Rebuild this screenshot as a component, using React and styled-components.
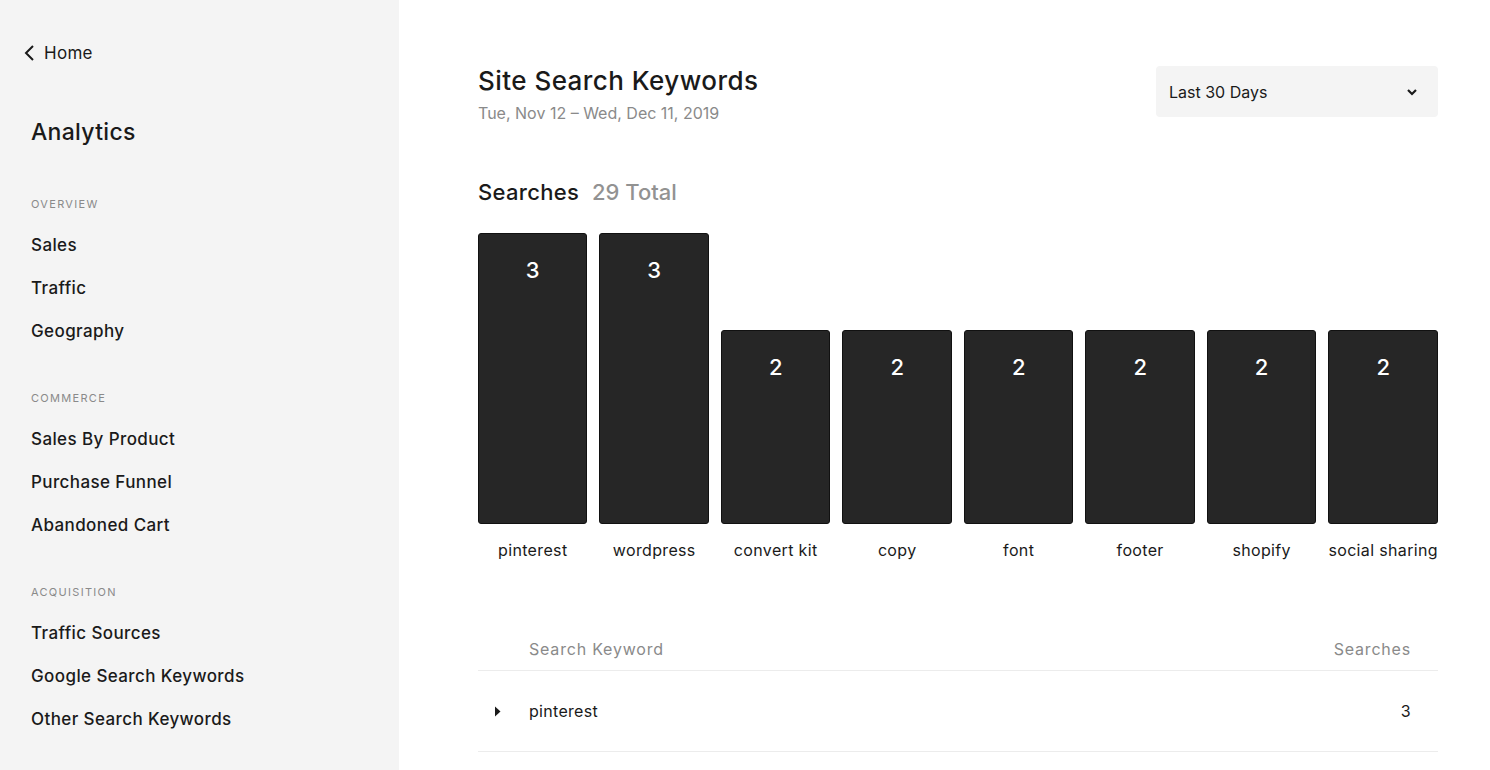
import React from "react";
import styled, { createGlobalStyle } from "styled-components";

const GlobalStyle = createGlobalStyle`
  html, body {
    margin: 0;
    padding: 0;
    background: #fff;
    font-family: Inter, "Noto Sans", sans-serif;
    color: #1a1a1a;
    -webkit-font-smoothing: antialiased;
  }
`;

const Page = styled.div`
  display: flex;
  height: 770px;
  overflow: hidden;
`;

const Sidebar = styled.aside`
  width: 399px;
  flex-shrink: 0;
  background: #f4f4f4;
  padding: 42px 0 0 31px;
  box-sizing: border-box;
`;

const BackLink = styled.a`
  display: flex;
  align-items: center;
  gap: 8px;
  margin-left: -7px;
  font-size: 17px;
  line-height: 22px;
  letter-spacing: 0.3px;
  color: #1a1a1a;
  text-decoration: none;
`;

const SideTitle = styled.h1`
  margin: 53px 0 0;
  font-size: 23px;
  line-height: 30px;
  font-weight: 500;
  letter-spacing: 0.3px;
`;

const Section = styled.div`
  margin-top: ${(p) => p.$top}px;
`;

const SectionLabel = styled.div`
  font-size: 11px;
  line-height: 14px;
  letter-spacing: 1.3px;
  color: #8a8a8a;
  text-transform: uppercase;
  margin-bottom: 23px;
`;

const NavItem = styled.div`
  font-size: 17px;
  line-height: 22px;
  height: 43px;
  font-weight: 500;
  letter-spacing: 0.4px;
  color: #1a1a1a;
`;

const Main = styled.main`
  flex: 1;
  padding: 64px 52px 0 79px;
`;

const Header = styled.div`
  display: flex;
  justify-content: space-between;
  align-items: flex-start;
`;

const Title = styled.h2`
  margin: 0;
  font-size: 26px;
  line-height: 34px;
  font-weight: 500;
  letter-spacing: 0.45px;
`;

const DateRange = styled.div`
  font-size: 16px;
  line-height: 20px;
  color: #8a8a8a;
  margin-top: 5px;
`;

const Select = styled.div`
  width: 282px;
  height: 51px;
  box-sizing: border-box;
  margin-top: 2px;
  background: #f4f4f4;
  border-radius: 4px;
  display: flex;
  align-items: center;
  justify-content: space-between;
  padding: 0 20px 0 13px;
  font-size: 16px;
  color: #1a1a1a;
`;

const ChartTitle = styled.div`
  margin-top: 55px;
  font-size: 22px;
  line-height: 28px;
  font-weight: 500;
  letter-spacing: 0.3px;
  display: flex;
  gap: 13px;
`;

const Muted = styled.span`
  color: #929292;
  letter-spacing: 0;
`;

const Chart = styled.div`
  display: flex;
  gap: 12px;
  margin-top: 27px;
`;

const Column = styled.div`
  flex: 1;
  display: flex;
  flex-direction: column;
  align-items: stretch;
`;

const BarArea = styled.div`
  height: 291px;
  display: flex;
  align-items: flex-end;
`;

const Bar = styled.div`
  width: 100%;
  box-sizing: border-box;
  background: #262626;
  border: 1px solid #111;
  border-radius: 3px;
  color: #fff;
  font-size: 22px;
  font-weight: 500;
  text-align: center;
  padding-top: 23px;
`;

const BarLabel = styled.div`
  text-align: center;
  font-size: 16px;
  line-height: 20px;
  margin-top: 16px;
  letter-spacing: 0.35px;
  color: #1a1a1a;
  white-space: nowrap;
`;

const Table = styled.div`
  margin-top: 68px;
`;

const Row = styled.div`
  display: grid;
  grid-template-columns: 51px 1fr auto;
  align-items: center;
  height: ${(p) => p.$h}px;
  border-bottom: 1px solid #ececec;
  padding-right: 27px;
  font-size: 16px;
  color: ${(p) => (p.$head ? "#8a8a8a" : "#1a1a1a")};
  letter-spacing: ${(p) => (p.$head ? "0.8px" : "0.3px")};
`;

const Caret = styled.span`
  display: flex;
  padding-left: 16px;
`;

const Chevron = () => (
  <svg width="12" height="18" viewBox="0 0 12 18" fill="none">
    <path d="M9 2L2 9l7 7" stroke="#1a1a1a" strokeWidth="2" />
  </svg>
);

const Down = () => (
  <svg width="12" height="8" viewBox="0 0 12 8" fill="none">
    <path d="M2 2l4 4 4-4" stroke="#1a1a1a" strokeWidth="2.2" />
  </svg>
);

const Triangle = () => (
  <svg width="7" height="11" viewBox="0 0 7 11">
    <path d="M1 0.5L6.5 5.5 1 10.5z" fill="#1a1a1a" />
  </svg>
);

const sections = [
  { label: "Overview", top: 50, items: ["Sales", "Traffic", "Geography"] },
  { label: "Commerce", top: 28, items: ["Sales By Product", "Purchase Funnel", "Abandoned Cart"] },
  { label: "Acquisition", top: 28, items: ["Traffic Sources", "Google Search Keywords", "Other Search Keywords"] },
];

const data = [
  { name: "pinterest", count: 3 },
  { name: "wordpress", count: 3 },
  { name: "convert kit", count: 2 },
  { name: "copy", count: 2 },
  { name: "font", count: 2 },
  { name: "footer", count: 2 },
  { name: "shopify", count: 2 },
  { name: "social sharing", count: 2 },
];

const max = 3;

export default function App() {
  return (
    <>
      <GlobalStyle />
      <Page>
        <Sidebar>
          <BackLink href="#">
            <Chevron />
            Home
          </BackLink>
          <SideTitle>Analytics</SideTitle>
          {sections.map((s) => (
            <Section key={s.label} $top={s.top}>
              <SectionLabel>{s.label}</SectionLabel>
              {s.items.map((i) => (
                <NavItem key={i}>{i}</NavItem>
              ))}
            </Section>
          ))}
        </Sidebar>
        <Main>
          <Header>
            <div>
              <Title>Site Search Keywords</Title>
              <DateRange>Tue, Nov 12 – Wed, Dec 11, 2019</DateRange>
            </div>
            <Select>
              Last 30 Days
              <Down />
            </Select>
          </Header>
          <ChartTitle>
            Searches <Muted>29 Total</Muted>
          </ChartTitle>
          <Chart>
            {data.map((d) => (
              <Column key={d.name}>
                <BarArea>
                  <Bar style={{ height: `${(d.count / max) * 100}%` }}>{d.count}</Bar>
                </BarArea>
                <BarLabel>{d.name}</BarLabel>
              </Column>
            ))}
          </Chart>
          <Table>
            <Row $head $h={42}>
              <span />
              <span>Search Keyword</span>
              <span>Searches</span>
            </Row>
            <Row $h={80}>
              <Caret>
                <Triangle />
              </Caret>
              <span>pinterest</span>
              <span>3</span>
            </Row>
          </Table>
        </Main>
      </Page>
    </>
  );
}
